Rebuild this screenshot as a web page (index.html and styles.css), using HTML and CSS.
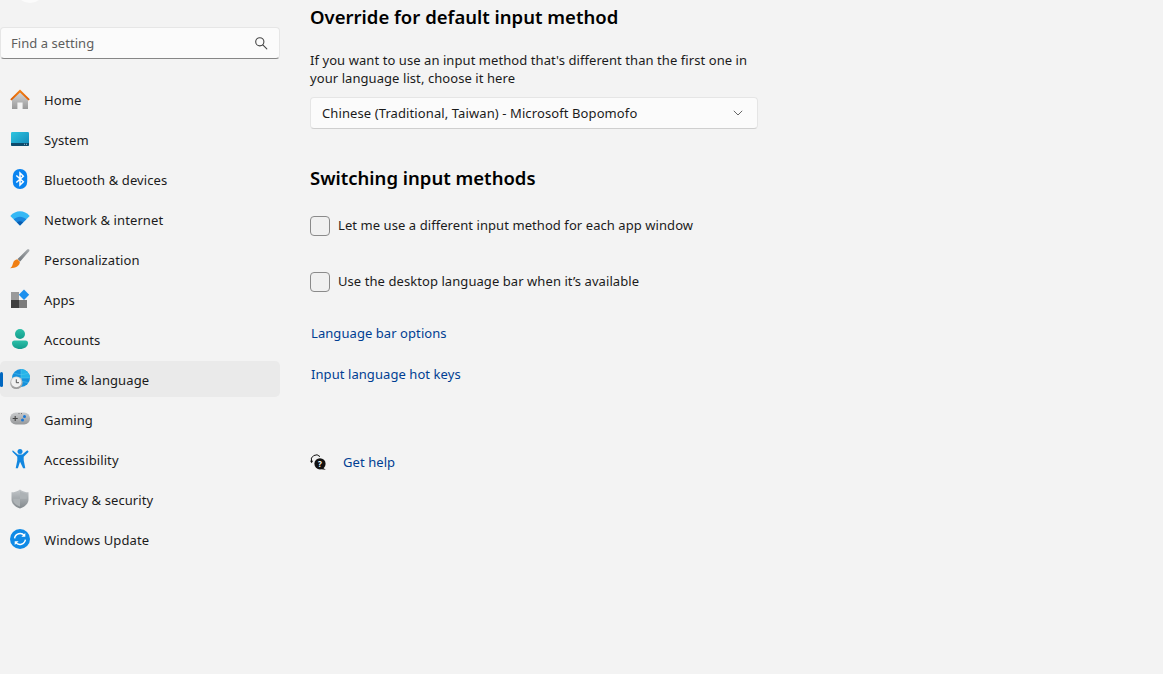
FILE: index.html
```html
<!DOCTYPE html>
<html lang="en">

<head>
  <meta charset="UTF-8">
  <meta name="viewport" content="width=device-width, initial-scale=1.0">
  <title>Settings</title>
  <link rel="stylesheet" href="styles.css">
</head>

<body>
  <svg class="defs" width="0" height="0">
    <defs>
      <linearGradient id="g-roof" x1="0" y1="0" x2="0" y2="1"><stop offset="0" stop-color="#f5851a"/><stop offset="1" stop-color="#dc5a00"/></linearGradient>
      <linearGradient id="g-wall" x1="0" y1="0" x2="0" y2="1"><stop offset="0" stop-color="#d8d8d8"/><stop offset="1" stop-color="#989898"/></linearGradient>
      <linearGradient id="g-screen" x1="0" y1="0" x2="1" y2="1"><stop offset="0" stop-color="#2ec5e0"/><stop offset="1" stop-color="#1187b8"/></linearGradient>
      <linearGradient id="g-teal" x1="0" y1="0" x2="0" y2="1"><stop offset="0" stop-color="#2cc0a8"/><stop offset="1" stop-color="#139c8c"/></linearGradient>
      <linearGradient id="g-shield" x1="0" y1="0" x2="0" y2="1"><stop offset="0" stop-color="#c2c6c9"/><stop offset="1" stop-color="#83898d"/></linearGradient>
      <linearGradient id="g-handle" x1="1" y1="0" x2="0" y2="1"><stop offset="0" stop-color="#a9adb0"/><stop offset="1" stop-color="#6f7478"/></linearGradient>
      <linearGradient id="g-pad" x1="0" y1="0" x2="0" y2="1"><stop offset="0" stop-color="#c9cbcd"/><stop offset="1" stop-color="#97999b"/></linearGradient>
    </defs>
  </svg>

  <div class="page">
    <nav class="sidebar">
      <div class="avatar-clip"><div class="avatar"></div></div>

      <div class="search">
        <span>Find a setting</span>
        <svg width="14" height="14" viewBox="0 0 14 14" fill="none" stroke="#444" stroke-width="1.1">
          <circle cx="5.8" cy="5.8" r="4.1"/>
          <path d="M8.8 8.8l4 4" stroke-linecap="round"/>
        </svg>
      </div>

      <ul class="nav-list">
        <li class="nav-item">
          <svg class="nav-icon" viewBox="0 0 20 20">
            <path d="M10 2.5L18 10v10H12.6v-6.500H7.4V20H2V10z" fill="url(#g-wall)"/>
            <path d="M.2 10.200L10 .600l9.800 9.600-1.300 1.400L10 3.400 1.500 11.600z" fill="url(#g-roof)"/>
          </svg>
          Home
        </li>
        <li class="nav-item">
          <svg class="nav-icon" viewBox="0 0 20 20">
            <rect x="1" y="3" width="18" height="14" rx="1.2" fill="url(#g-screen)"/>
            <path d="M1 14h18v1.800A1.200 1.200 0 0 1 17.800 17H2.200A1.200 1.200 0 0 1 1 15.800z" fill="#0d4a6b"/>
            <path d="M14 15.300h1M16 15.300h1" stroke="#bfe3ee" stroke-width=".8"/>
          </svg>
          System
        </li>
        <li class="nav-item">
          <svg class="nav-icon" viewBox="0 0 20 20">
            <rect x="2.800" y="0" width="14.400" height="20" rx="7" fill="#0a84f0"/>
            <path d="M6.300 6.500l7 6.300L10 16V4l3.300 3.200-7 6.300" fill="none" stroke="#fff" stroke-width="1.500"/>
          </svg>
          Bluetooth &amp; devices
        </li>
        <li class="nav-item">
          <svg class="nav-icon" viewBox="0 0 20 20">
            <path d="M.3 7C5.800.8 14.200.8 19.700 7L10 16.500z" fill="#35b8f5"/>
            <path d="M3.700 10.300c3.800-3.400 8.800-3.400 12.600 0L10 16.500z" fill="#1a86dc"/>
            <path d="M6.800 13.300c2-1.500 4.400-1.500 6.400 0L10 16.500z" fill="#0b5cae"/>
          </svg>
          Network &amp; internet
        </li>
        <li class="nav-item">
          <svg class="nav-icon" viewBox="0 0 20 20">
            <path d="M18.900.300c.7.500.7 1.200.3 1.900L10.200 12.400 7.600 10 17.200.600c.5-.4 1.200-.6 1.700-.300z" fill="url(#g-handle)"/>
            <path d="M7.300 10.300l2.600 2.500c-.1 4-3.900 6.400-9.900 6.400 2.200-1.300 2.400-2.900 3.100-5.200.6-2.100 2.100-3.400 4.200-3.700z" fill="#f07f13"/>
          </svg>
          Personalization
        </li>
        <li class="nav-item">
          <svg class="nav-icon" viewBox="0 0 20 20">
            <rect x="1" y="3" width="8" height="8" fill="#9a9a9a"/>
            <rect x="1" y="11" width="8" height="8" fill="#3f3f3f"/>
            <rect x="9" y="11" width="8" height="8" fill="#7b7b7b"/>
            <path d="M14 .600l5.200 5.200-5.200 5.200-5.200-5.200z" fill="#1c90ee"/>
          </svg>
          Apps
        </li>
        <li class="nav-item">
          <svg class="nav-icon" viewBox="0 0 20 20">
            <circle cx="10" cy="5" r="5" fill="url(#g-teal)"/>
            <path d="M2 14a2.500 2.500 0 0 1 2.500-2.500h11A2.500 2.500 0 0 1 18 14c0 3.800-3.800 6-8 6s-8-2.200-8-6z" fill="url(#g-teal)"/>
          </svg>
          Accounts
        </li>
        <li class="nav-item active">
          <svg class="nav-icon" viewBox="0 0 20 20">
            <circle cx="11" cy="9" r="9" fill="#1691dc"/>
            <path d="M11 0a9 9 0 0 1 9 9H11z" fill="#27b4e8"/>
            <path d="M11 0v18M2 9h18M4 4c4 2 10 2 14 0M4 14c4-2 10-2 14 0" fill="none" stroke="#5cc8ee" stroke-width=".5"/>
            <circle cx="6.300" cy="13.700" r="6.300" fill="url(#g-wall)"/>
            <circle cx="6.300" cy="13.300" r="5" fill="#f1f1f1"/>
            <path d="M6.300 10.300v3.400h2.700" fill="none" stroke="#444" stroke-width=".9"/>
          </svg>
          Time &amp; language
        </li>
        <li class="nav-item">
          <svg class="nav-icon" viewBox="0 0 20 20">
            <rect x="0" y="3.500" width="20" height="12" rx="5.800" fill="url(#g-pad)"/>
            <path d="M8.500 4.600h1M11 4.600h1" stroke="#555" stroke-width=".8"/>
            <path d="M2.700 9.500h5M5.200 7v5" stroke="#444" stroke-width="1.100"/>
            <circle cx="14.500" cy="7.500" r="1.500" fill="#1a78d6"/>
            <circle cx="12.500" cy="11" r="1.500" fill="#1a78d6"/>
          </svg>
          Gaming
        </li>
        <li class="nav-item">
          <svg class="nav-icon" viewBox="0 0 20 20">
            <circle cx="10" cy="2.500" r="2.500" fill="#1287e0"/>
            <path d="M2.700 1.300l5 4.200h4.600l5-4.200 1.400 1.500-5 5v3.500l1.600 7.900h-2.200L10 12.800 7.900 19.200H5.700l1.600-7.900V7.800l-5-5z" fill="#1287e0"/>
          </svg>
          Accessibility
        </li>
        <li class="nav-item">
          <svg class="nav-icon" viewBox="0 0 20 20">
            <path d="M10 .5c2.500 1.900 5.300 2.800 8.500 2.800v7.200c0 4-3.400 7.300-8.500 9-5.100-1.700-8.500-5-8.500-9V3.300C4.700 3.300 7.500 2.400 10 .5z" fill="url(#g-shield)"/>
            <path d="M10 2.300v15.300c-4-1.500-6.800-4-6.800-7.100V9.800H10z" fill="#adb2b5"/>
            <path d="M10 2.300c2 1.300 4.400 2.200 6.800 2.400V9.800H10z" fill="#adb2b5"/>
          </svg>
          Privacy &amp; security
        </li>
        <li class="nav-item">
          <svg class="nav-icon" viewBox="0 0 20 20">
            <circle cx="10" cy="10" r="10" fill="#0f8ae6"/>
            <path d="M4.600 9.300A5.500 5.500 0 0 1 14.400 6.700M15.400 10.700A5.500 5.500 0 0 1 5.600 13.300" fill="none" stroke="#fff" stroke-width="1.400"/>
            <path d="M15.300 3.900v3.900h-3.900zM4.700 16.100v-3.900h3.900z" fill="#fff"/>
          </svg>
          Windows Update
        </li>
      </ul>
    </nav>

    <main class="content">
      <h2 class="section-title first">Override for default input method</h2>
      <p class="section-text">If you want to use an input method that's different than the first one in your language list, choose it here</p>
      <div class="dropdown">
        <span>Chinese (Traditional, Taiwan) - Microsoft Bopomofo</span>
        <svg width="10" height="6" viewBox="0 0 10 6" fill="none" stroke="#666" stroke-width="1"><path d="M.8.800L5 5l4.200-4.200"/></svg>
      </div>

      <h2 class="section-title second">Switching input methods</h2>
      <label class="check-row"><span class="checkbox"></span><span class="check-label">Let me use a different input method for each app window</span></label>
      <label class="check-row"><span class="checkbox"></span><span class="check-label">Use the desktop language bar when it’s available</span></label>

      <a class="link bar-options" href="#">Language bar options</a>
      <a class="link hot-keys" href="#">Input language hot keys</a>

      <div class="help">
        <svg width="16" height="16" viewBox="0 0 16 16">
          <path d="M1.500 7.500A5 5 0 0 1 10 2.600" fill="none" stroke="#111" stroke-width="1"/>
          <path d="M0 6.800h3.200L1.600 9.300z" fill="#111"/>
          <circle cx="10" cy="9.800" r="5.600" fill="#111"/>
          <path d="M12.500 13.500l3.300 2.300-4.500-.6z" fill="#111"/>
          <text x="10" y="12.700" class="help-mark" text-anchor="middle">?</text>
        </svg>
        <a class="link" href="#">Get help</a>
      </div>
    </main>
  </div>
</body>

</html>
```

FILE: styles.css
```css
* {
  box-sizing: border-box;
}

html,
body {
  height: 100%;
}

body {
  margin: 0;
  background-color: #f3f3f3;
  color: #1b1b1b;
  font-family: "Noto Sans", "Open Sans", sans-serif;
  font-size: 13px;
  overflow: hidden;
}

.defs {
  display: block;
  height: 0;
}

.page {
  display: flex;
  height: 100%;
}

.sidebar {
  width: 310px;
  flex: none;
}

.avatar-clip {
  height: 3px;
  margin-left: 15px;
  overflow: hidden;
}

.avatar {
  width: 30px;
  height: 30px;
  margin-top: -27px;
  border-radius: 50%;
  background-color: #fbfbfb;
}

.search {
  display: flex;
  align-items: center;
  justify-content: space-between;
  width: 280px;
  height: 32px;
  margin-top: 24px;
  padding: 0 11px 0 10px;
  background-color: #fbfbfb;
  border: 1px solid #e6e6e6;
  border-bottom: 1px solid #868686;
  border-radius: 4px;
  color: #5e5e5e;
  letter-spacing: 0.05px;
}

.nav-list {
  list-style: none;
  margin: 22px 0 0;
  padding: 0;
}

.nav-item {
  position: relative;
  display: flex;
  align-items: center;
  gap: 14px;
  width: 280px;
  height: 36px;
  margin-bottom: 4px;
  padding-left: 10px;
  padding-top: 2px;
  border-radius: 5px;
  letter-spacing: 0.1px;
}

.nav-item.active {
  background-color: #eaeaea;
}

.nav-item.active::before {
  content: "";
  position: absolute;
  left: 0;
  top: 11px;
  width: 3px;
  height: 15px;
  border-radius: 2px;
  background-color: #0067c0;
}

.nav-icon {
  width: 20px;
  height: 20px;
  flex: none;
  margin-bottom: 2px;
}

.content {
  width: 448px;
  letter-spacing: 0.07px;
}

.section-title {
  margin: 0;
  color: #000;
  font-size: 18.5px;
  font-weight: 600;
  letter-spacing: 0;
  line-height: 26px;
}

.section-title.first {
  margin-top: 4px;
}

.section-title.second {
  margin-top: 36px;
}

.section-text {
  margin: 21px 0 0;
  line-height: 18px;
}

.dropdown {
  display: flex;
  align-items: center;
  justify-content: space-between;
  height: 32px;
  margin-top: 10px;
  padding: 0 14px 0 11px;
  background-color: #fbfbfb;
  border: 1px solid #e5e5e5;
  border-bottom-color: #cfcfcf;
  border-radius: 4px;
  letter-spacing: 0.1px;
}

.check-row {
  display: flex;
  align-items: center;
  gap: 8px;
  height: 20px;
}

.check-label {
  margin-bottom: 2px;
}

.section-title + .check-row {
  margin-top: 25px;
}

.check-row + .check-row {
  margin-top: 36px;
}

.checkbox {
  width: 20px;
  height: 20px;
  background-color: #f0f0f0;
  border: 1px solid #8a8a8a;
  border-radius: 4px;
}

.link {
  color: #003e92;
  text-decoration: none;
}

.bar-options,
.hot-keys {
  display: block;
  margin-left: 1px;
  line-height: 18px;
}

.bar-options {
  margin-top: 32px;
}

.hot-keys {
  margin-top: 23px;
}

.help {
  display: flex;
  align-items: center;
  gap: 17px;
  height: 18px;
  margin-top: 70px;
}

.help-mark {
  fill: #fff;
  font-size: 8px;
  font-weight: 700;
}
```
